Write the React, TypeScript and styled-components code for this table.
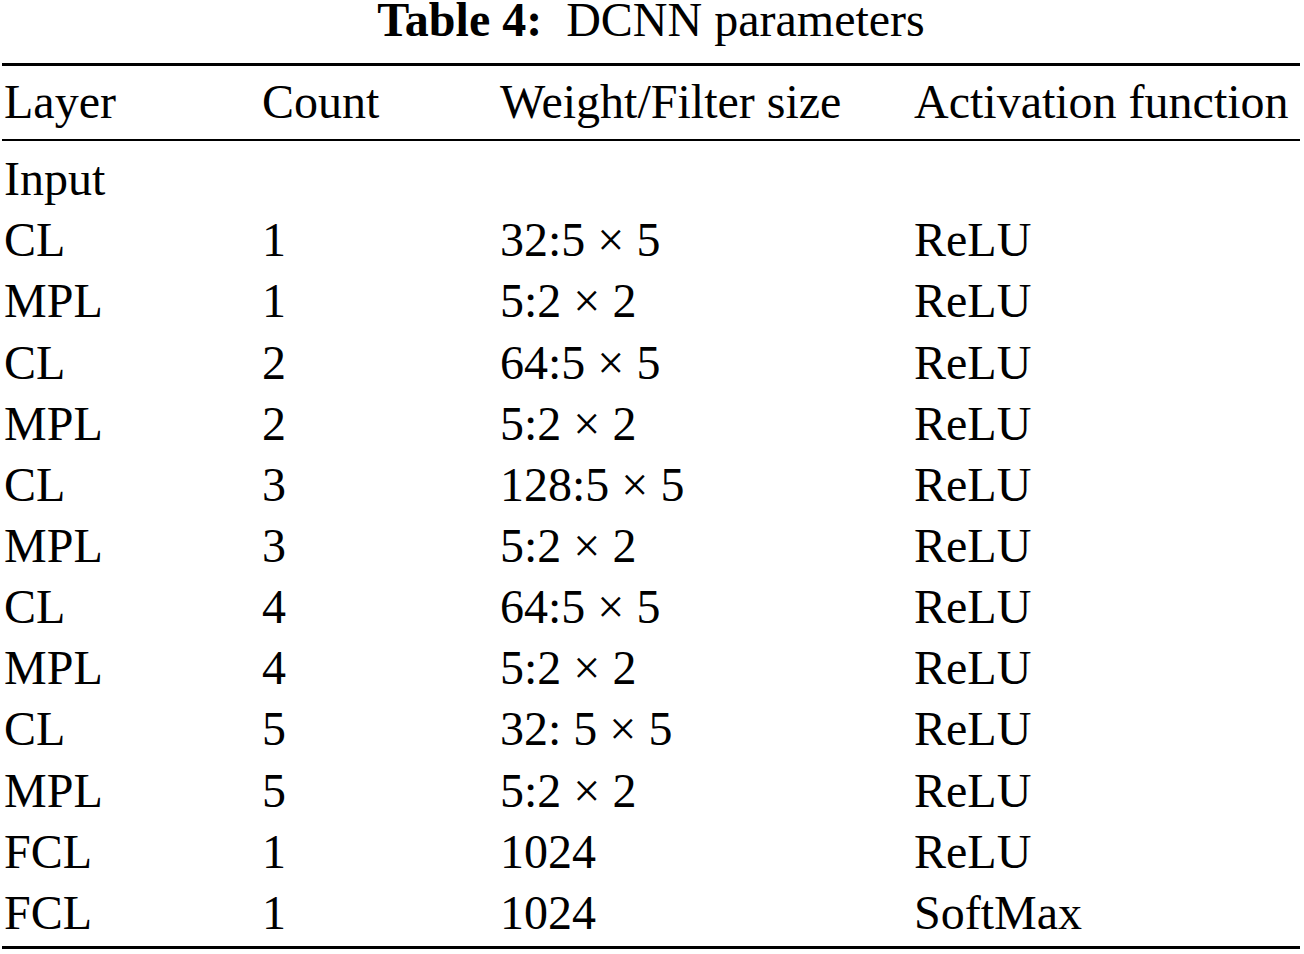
import * as React from "react";
import styled, { createGlobalStyle } from "styled-components";

const GlobalStyle = createGlobalStyle`
  html, body {
    margin: 0;
    padding: 0;
    background: #fff;
  }
  body {
    font-family: "Liberation Serif", "Times New Roman", serif;
    color: #000;
  }
`;

const Page = styled.div`
  width: 1304px;
  padding: 0 4px 0 2px;
  box-sizing: border-box;
`;

const Caption = styled.div`
  font-size: 48px;
  line-height: 44px;
  height: 44px;
  padding-top: 0;
  margin-top: -2px;
  text-align: center;
  margin-bottom: 21px;
  white-space: nowrap;
  strong {
    font-weight: bold;
    margin-right: 24px;
  }
`;

const TableStyled = styled.div`
  border-top: 3px solid #000;
  border-bottom: 3px solid #000;
`;

const Head = styled.div`
  border-bottom: 2px solid #000;
  padding: 5px 0 7px;
`;

const Body = styled.div`
  padding: 7px 0 3px;
`;

const Row = styled.div`
  display: grid;
  grid-template-columns: 258px 238px 414px 1fr;
  padding-left: 2px;
  font-size: 48px;
  line-height: 61.15px;
  height: 61.15px;
  white-space: nowrap;
`;

const Cell = styled.span``;

const rows: [string, string, string, string][] = [
  ["Input", "", "", ""],
  ["CL", "1", "32:5 × 5", "ReLU"],
  ["MPL", "1", "5:2 × 2", "ReLU"],
  ["CL", "2", "64:5 × 5", "ReLU"],
  ["MPL", "2", "5:2 × 2", "ReLU"],
  ["CL", "3", "128:5 × 5", "ReLU"],
  ["MPL", "3", "5:2 × 2", "ReLU"],
  ["CL", "4", "64:5 × 5", "ReLU"],
  ["MPL", "4", "5:2 × 2", "ReLU"],
  ["CL", "5", "32: 5 × 5", "ReLU"],
  ["MPL", "5", "5:2 × 2", "ReLU"],
  ["FCL", "1", "1024", "ReLU"],
  ["FCL", "1", "1024", "SoftMax"],
];

const App = () => {
  return (
    <Page>
      <GlobalStyle />
      <Caption>
        <strong>Table 4:</strong>DCNN parameters
      </Caption>
      <TableStyled>
        <Head>
          <Row>
            <Cell>Layer</Cell>
            <Cell>Count</Cell>
            <Cell>Weight/Filter size</Cell>
            <Cell>Activation function</Cell>
          </Row>
        </Head>
        <Body>
          {rows.map((r, i) => (
            <Row key={i}>
              {r.map((c, j) => (
                <Cell key={j}>{c}</Cell>
              ))}
            </Row>
          ))}
        </Body>
      </TableStyled>
    </Page>
  );
};

export default App;
